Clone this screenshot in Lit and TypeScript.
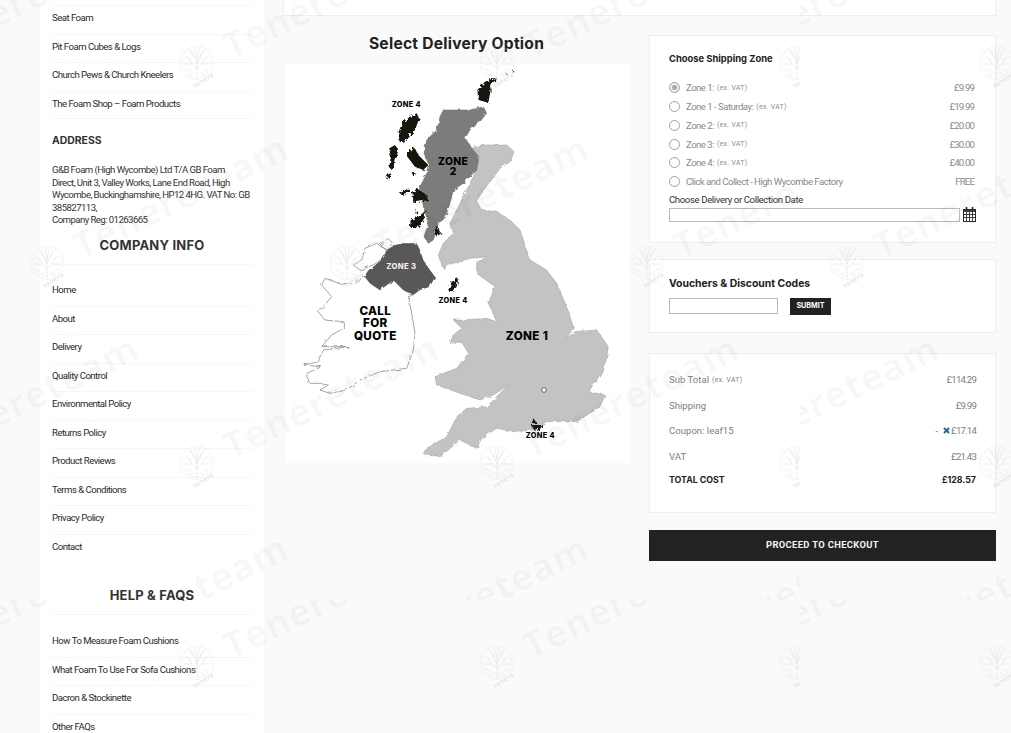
import { LitElement, html, css, svg } from "lit";
import { customElement } from "lit/decorators.js";

const z1 = "M510 580 L530 540 L560 480 L585 430 L597 380 L575 355 L600 345 L680 345 L702 365 L690 395 L660 415 L635 450 L610 480 L590 512 L605 540 L650 545 L690 570 L720 600 L730 630 L750 690 L800 720 L830 760 L860 830 L880 890 L860 925 L885 905 L950 900 L985 950 L975 1010 L950 1050 L925 1085 L975 1095 L960 1130 L890 1175 L800 1175 L760 1200 L700 1205 L650 1195 L605 1225 L590 1255 L540 1230 L480 1280 L430 1270 L440 1255 L500 1220 L530 1160 L560 1135 L620 1130 L685 1065 L640 1095 L600 1110 L540 1090 L470 1065 L465 1040 L530 1015 L565 970 L545 935 L510 940 L520 915 L545 895 L520 870 L550 870 L620 865 L650 875 L625 820 L645 770 L590 730 L590 700 L620 680 L570 685 L520 700 L490 715 L475 675 L490 640 L520 610 Z";
const z2 = "M490 240 L540 240 L570 240 L610 230 L620 250 L600 275 L570 300 L555 325 L570 345 L575 355 L597 380 L590 420 L550 460 L520 480 L510 520 L495 565 L475 580 L460 630 L445 640 L432 620 L445 580 L430 530 L420 470 L440 430 L445 400 L432 370 L440 330 L470 300 L480 260 Z";
const z3 = "M370 640 L410 640 L420 660 L430 690 L450 720 L465 740 L450 770 L420 780 L400 795 L370 780 L340 750 L300 780 L270 760 L255 740 L280 710 L310 685 L320 660 L345 645 Z";
const ire = "M300 645 L325 625 L338 640 L320 660 L300 645 M245 690 L255 655 L290 640 L320 660 L310 685 L280 705 L240 720 L220 705 Z M255 740 L225 760 L190 765 L135 745 L125 765 L155 800 L125 835 L110 840 L135 870 L190 875 L190 895 L155 915 L125 950 L205 950 L130 960 L115 995 L70 1005 L125 1010 L80 1030 L85 1060 L115 1060 L145 1065 L120 1080 L150 1090 L200 1080 L240 1050 L300 1025 L380 1015 L400 960 L405 910 L395 850 L385 800 L400 795 L370 780 L340 750 L300 780 L270 760 Z";
const isles = [
  "M410 250 L418 265 L405 300 L385 325 L360 340 L355 310 L365 280 L390 260 Z",
  "M345 345 L355 360 L345 400 L335 420 L328 412 L332 380 L328 355 Z M328 428 L334 432 L322 448 L318 446 Z",
  "M400 350 L420 380 L445 405 L430 420 L405 410 L378 375 Z",
  "M410 475 L440 495 L445 510 L400 518 L398 490 Z",
  "M440 540 L430 570 L410 598 L390 590 L392 570 L415 560 Z M408 540 L414 545 L406 552 Z",
  "M475 590 L483 610 L470 620 L462 600 Z",
  "M395 425 L410 430 L400 440 Z M360 490 L385 475 L390 482 L365 495 Z",
  "M640 145 L652 146 L630 165 L632 180 L625 218 L595 210 L592 180 L615 155 Z M700 122 L703 126 L698 128 Z M680 130 L684 133 L679 135 Z",
  "M535 745 L530 770 L510 788 L505 780 L515 755 Z",
  "M755 1185 L790 1185 L775 1202 L760 1198 Z M760 1165 L770 1180 L755 1180 Z",
];

const rowsA = [-103, 197, 497, 797];
const rowsB = [-253, 47, 347, 647];
const rows: [number, number[]][] = [[0, rowsA], [200, rowsB], [400, rowsA], [600, rowsB]];
const tiles = [[0, 0], [800, 0], [0, 600], [800, 600]];

const tree = "M0 15V-3M0 6L-9 -4M0 6L9 -4M0 1L-5 -11M0 1L5 -11M-5 1L-13 1M5 1L13 1M-6 -3L-12 -7M6 -3L12 -7M-3 -5L-7 -13M3 -5L7 -13M0 -3L-2 -14M0 -3L2 -14M-7 8L-12 6M7 8L12 6M-3 10L-8 12M3 10L8 12";

function stamp(x: number, y: number) {
  return svg`<g transform="translate(${x} ${y + 63})" fill="none" stroke="#dedede" stroke-width=".7">
    <ellipse rx="17" ry="16.5" stroke-dasharray="1 .9"></ellipse>
    <ellipse rx="14.5" ry="14" stroke-dasharray=".5 1.6"></ellipse>
    <path d=${tree} stroke-dasharray="1.6 .7"></path>
    <text x="-2" y="25" font-size="6.5" fill="#dadada" stroke="none" font-family="Lato, sans-serif" letter-spacing=".8" transform="rotate(-32 -2 25)">tenere</text>
  </g>
  <text x=${x + 34} y=${y + 60} transform="rotate(-26 ${x + 34} ${y + 60})" class="wt">Tenereteam</text>`;
}

@customElement("app-root")
class AppRoot extends LitElement {
  static styles = css`
    :host { display: block; position: relative; width: 1011px; height: 733px; overflow: hidden; background: #fafafa; font-family: Roboto, sans-serif; color: #333; }
    .page { display: grid; grid-template-columns: 224px 713px; column-gap: 19px; padding-left: 40px; height: 733px; }
    aside { background: #fff; padding-top: 5px; overflow: hidden; height: 728px; }
    .lnks { margin: 0 12px; display: flex; flex-direction: column; }
    .lnks a { height: 28.5px; line-height: 23.5px; font-size: 9.6px; letter-spacing: -.52px; color: #2a2a2a; border-top: 1px solid #f6f6f6; box-sizing: border-box; display: block; }
    .lnks a.nb { border-top-color: transparent; }
    .lnks a.last { border-bottom: 1px solid #f6f6f6; }
    h4 { margin: 0; font: 700 10.4px/14px Inter, sans-serif; color: #222; }
    .addr-h { margin: 15px 12px 0; color: #333; }
    .addr { margin: 16px 12px 0; font-size: 9.6px; letter-spacing: -.56px; line-height: 12.5px; color: #333; height: 63px; white-space: nowrap; }
    .wh { margin: 0 12px; text-align: center; font: 700 13px/18px Inter, sans-serif; letter-spacing: .2px; color: #333; height: 29px; border-bottom: 1px solid #f6f6f6; box-sizing: border-box; }
    .co { margin-top: 9px; }
    .li { margin-top: 12px; }
    .help { margin-top: 24px; }
    .li2 { margin-top: 13px; }
    main { display: flex; flex-direction: column; }
    .top { height: 16px; box-sizing: border-box; background: #fff; border: 1px solid #eee; border-top: 0; }
    .cols { display: grid; grid-template-columns: 347px 347px; column-gap: 19px; }
    h2 { margin: 16px 0 0; text-align: center; font: 700 15.6px/24px Inter, sans-serif; letter-spacing: .25px; color: #222; height: 24px; }
    .map { margin: 8px 0 0 2px; width: 345px; height: 399px; background: #fff; display: block; }
    .map text { font-family: Inter, sans-serif; font-weight: 800; text-anchor: middle; letter-spacing: 1px; }
    .right { padding-top: 19px; display: flex; flex-direction: column; }
    .card { background: #fff; border: 1px solid #eee; box-sizing: border-box; padding: 0 19px; }
    .c1 { height: 208px; padding-top: 16px; }
    .c2 { height: 74px; margin-top: 16px; padding-top: 17px; }
    .c3 { height: 160px; margin-top: 20px; padding-top: 13px; }
    .c1 h4 { margin-bottom: 12.6px; font-size: 9.4px; }
    .zone { display: flex; align-items: center; height: 18.7px; font-size: 9.6px; letter-spacing: -.52px; color: #8a8a8a; }
    .radio { width: 9px; height: 9px; border: 1px solid #a0a0a0; border-radius: 50%; margin-right: 6px; flex: none; display: flex; align-items: center; justify-content: center; }
    .radio i { width: 5px; height: 5px; border-radius: 50%; background: #a8a8a8; }
    .radio.on { background: #eee; }
    small { font-size: 6.8px; letter-spacing: .35px; margin-left: 3px; }
    .grow { flex: 1; }
    .val { margin-right: 2px; letter-spacing: -.85px; }
    .lab { font-size: 9.6px; letter-spacing: -.38px; color: #333; line-height: 12px; margin-top: 3px; }
    .dr { display: flex; align-items: flex-end; gap: 3px; margin-top: 1px; }
    .inp { display: block; height: 14px; box-sizing: border-box; border: 1px solid #bbb; background: #fff; }
    .dr .inp { width: 291px; }
    .vo { display: flex; align-items: flex-start; margin-top: 7px; gap: 12px; }
    .vo .inp { width: 109px; height: 16px; }
    .sub { background: #222; color: #fff; font: 700 7.2px/16px Inter, sans-serif; width: 41px; text-align: center; height: 17px; }
    .tot { display: flex; align-items: center; height: 25.5px; font-size: 9.6px; color: #808080; }
    .tot .val { margin: 0; letter-spacing: -.8px; }
    .tot.last { height: 20px; }
    .tot b { font: 700 8.8px Inter, sans-serif; color: #222; letter-spacing: 0; }
    .x { margin: 0 1px 0 5px; width: 7px; height: 7px; display: block; }
    .go { margin-top: 17px; height: 31px; background: #222; color: #f4f4f4; text-align: center; font: 700 9.4px/29px Roboto, sans-serif; letter-spacing: .35px; }
    .wm { position: absolute; left: 0; top: 0; width: 1011px; height: 733px; pointer-events: none; }
    .wm .wt { font: 700 37px "Open Sans", sans-serif; letter-spacing: 1px; fill: rgba(0, 0, 0, .03); }
  `;

  list(items: string[], nb = true) {
    return items.map((t, i) => html`<a class=${i === 0 && nb ? "nb" : ""}>${t}</a>`);
  }

  render() {
    return html`<div class="page">
      <aside>
        <div class="lnks">${this.list(["Seat Foam", "Pit Foam Cubes & Logs", "Church Pews & Church Kneelers"], false)}<a class="last">The Foam Shop – Foam Products</a></div>
        <h4 class="addr-h">ADDRESS</h4>
        <div class="addr">G&amp;B Foam (High Wycombe) Ltd T/A GB Foam<br>Direct, Unit 3, Valley Works, Lane End Road, High<br>Wycombe, Buckinghamshire, HP12 4HG. VAT No: GB<br>385827113,<br>Company Reg: 01263665</div>
        <div class="wh co">COMPANY INFO</div>
        <div class="lnks li">${this.list(["Home", "About", "Delivery", "Quality Control", "Environmental Policy", "Returns Policy", "Product Reviews", "Terms & Conditions", "Privacy Policy", "Contact"])}</div>
        <div class="wh help">HELP &amp; FAQS</div>
        <div class="lnks li2">${this.list(["How To Measure Foam Cushions", "What Foam To Use For Sofa Cushions", "Dacron & Stockinette", "Other FAQs"])}</div>
      </aside>
      <main>
        <div class="top"></div>
        <div class="cols">
          <div>
            <h2>Select Delivery Option</h2>
            <svg class="map" viewBox="15 102 1035 1197">
              <defs>
                <filter id="rough" x="-5%" y="-5%" width="110%" height="110%">
                  <feTurbulence type="fractalNoise" baseFrequency=".07" numOctaves="2" seed="4"></feTurbulence>
                  <feDisplacementMap in="SourceGraphic" scale="11"></feDisplacementMap>
                </filter>
                <filter id="rough2" x="-20%" y="-20%" width="140%" height="140%">
                  <feTurbulence type="fractalNoise" baseFrequency=".12" numOctaves="2" seed="9"></feTurbulence>
                  <feDisplacementMap in="SourceGraphic" scale="15"></feDisplacementMap>
                </filter>
              </defs>
              <g filter="url(#rough)">
                <path d=${ire} fill="#fff" stroke="#666" stroke-width="1.8"></path>
                <path d=${z1} fill="#c4c3c3" stroke="#999" stroke-width="1.5"></path>
                <path d=${z2} fill="#7d7c7b" stroke="#666" stroke-width="1.5"></path>
                <path d=${z3} fill="#5a5856"></path>
              </g>
              <g filter="url(#rough2)">${isles.map((d) => svg`<path d=${d} fill="#17140f"></path>`)}</g>
              <circle cx="792" cy="1080" r="7" fill="#fff" stroke="#222" stroke-width="2"></circle>
              <text x="379" y="231" font-size="22">ZONE 4</text>
              <text x="519" y="405" font-size="31">ZONE</text>
              <text x="520" y="436" font-size="31">2</text>
              <text x="364" y="716" font-size="23" fill="#eee">ZONE 3</text>
              <text x="519" y="819" font-size="22">ZONE 4</text>
              <text x="286" y="855" font-size="35">CALL</text>
              <text x="286" y="892" font-size="35">FOR</text>
              <text x="286" y="929" font-size="35">QUOTE</text>
              <text x="741" y="930" font-size="35">ZONE 1</text>
              <text x="781" y="1225" font-size="22">ZONE 4</text>
            </svg>
          </div>
          <div class="right">
            <div class="card c1">
              <h4>Choose Shipping Zone</h4>
              <div class="zone"><span class="radio on"><i></i></span>Zone 1:<small>(ex. VAT)</small><span class="grow"></span><span class="val">£9.99</span></div>
              <div class="zone"><span class="radio"></span>Zone 1 - Saturday:<small>(ex. VAT)</small><span class="grow"></span><span class="val">£19.99</span></div>
              <div class="zone"><span class="radio"></span>Zone 2:<small>(ex. VAT)</small><span class="grow"></span><span class="val">£20.00</span></div>
              <div class="zone"><span class="radio"></span>Zone 3:<small>(ex. VAT)</small><span class="grow"></span><span class="val">£30.00</span></div>
              <div class="zone"><span class="radio"></span>Zone 4:<small>(ex. VAT)</small><span class="grow"></span><span class="val">£40.00</span></div>
              <div class="zone"><span class="radio"></span>Click and Collect - High Wycombe Factory<span class="grow"></span><span class="val">FREE</span></div>
              <div class="lab">Choose Delivery or Collection Date</div>
              <div class="dr"><span class="inp"></span>
                <svg width="13" height="15" viewBox="0 0 13 15" fill="none" stroke="#2a2a2a"><rect x=".5" y="2.5" width="12" height="12"></rect><path d="M.5 3.5h12M.5 4.5h12M.5 7.5h12M.5 10.5h12M3.5 5v9M6.5 5v9M9.5 5v9" stroke-width=".9"></path><path d="M3.5 0v3M9.5 0v3" stroke-width="1.6"></path></svg>
              </div>
            </div>
            <div class="card c2">
              <h4>Vouchers &amp; Discount Codes</h4>
              <div class="vo"><span class="inp"></span><span class="sub">SUBMIT</span></div>
            </div>
            <div class="card c3">
              <div class="tot">Sub Total<small>(ex. VAT)</small><span class="grow"></span><span class="val">£114.29</span></div>
              <div class="tot">Shipping<span class="grow"></span><span class="val">£9.99</span></div>
              <div class="tot">Coupon: leaf15<span class="grow"></span>-<svg class="x" viewBox="0 0 7 7"><path d="M1 1l5 5M6 1l-5 5" stroke="#1f6c96" stroke-width="2"></path></svg><span class="val">£17.14</span></div>
              <div class="tot">VAT<span class="grow"></span><span class="val">£21.43</span></div>
              <div class="tot last"><b>TOTAL COST</b><span class="grow"></span><b>£128.57</b></div>
            </div>
            <div class="go">PROCEED TO CHECKOUT</div>
          </div>
        </div>
      </main>
    </div>
    <svg class="wm" viewBox="0 0 1011 733">
      <defs><clipPath id="tile"><rect width="800" height="600"></rect></clipPath></defs>
      ${tiles.map(([tx, ty]) => svg`<g transform="translate(${tx} ${ty})" clip-path="url(#tile)">
        ${rows.map(([y, xs]) => xs.map((x) => stamp(x, y)))}
      </g>`)}
    </svg>`;
  }
}
